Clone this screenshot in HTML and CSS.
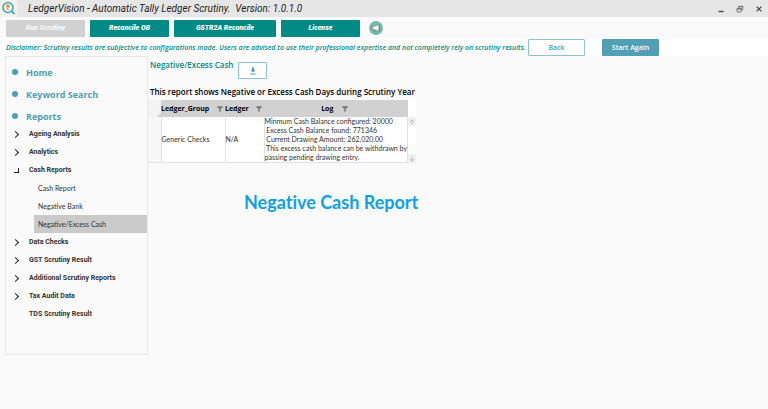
FILE: index.html
```
<!DOCTYPE html>
<html lang="en">
<head>
    <meta charset="UTF-8">
    <meta name="viewport" content="width=device-width, initial-scale=1.0">
    <title>LedgerVision</title>
    <link rel="stylesheet" href="styles.css">
</head>
<body>
    <header class="titlebar">
        <svg class="titlebar__logo" viewBox="0 0 17 17">
            <rect width="17" height="17" rx="2" fill="#f3f1ee"/>
            <circle cx="8" cy="7.5" r="5" fill="#fdf3e6" stroke="#35b0b5" stroke-width="1.6"/>
            <path d="M11.6 11.4l2.4 2.2" stroke="#35b0b5" stroke-width="1.8" stroke-linecap="round"/>
            <path d="M6 5h4M6 6.5h4M6.6 5c3 0 3 3 0 3l2.2 2.4" fill="none" stroke="#f08a3c" stroke-width="1"/>
        </svg>
        <h1 class="titlebar__title">LedgerVision - Automatic Tally Ledger Scrutiny.&nbsp; Version: 1.0.1.0</h1>
        <div class="titlebar__controls">
            <button type="button" aria-label="Minimize">
                <svg viewBox="0 0 8 8"><path d="M1.5 6.5h5" stroke="#444" stroke-width="1.4"/></svg>
            </button>
            <button type="button" aria-label="Restore">
                <svg viewBox="0 0 8 8"><path d="M1 3.5h4.4L4.9 7H1zM2.6 3.3V1.3H7L6.5 5H5.4M1 4.2h4.3M2.6 1.8H7" fill="none" stroke="#666" stroke-width=".8"/></svg>
            </button>
            <button type="button" aria-label="Close">
                <svg viewBox="0 0 8 8"><path d="M1.6 1.6l4.8 4.8M6.4 1.6L1.6 6.4" stroke="#444" stroke-width="1.2"/></svg>
            </button>
        </div>
    </header>

    <div class="toolbar">
        <button type="button" class="toolbar__button" disabled>Run Scrutiny</button>
        <button type="button" class="toolbar__button">Reconcile OB</button>
        <button type="button" class="toolbar__button toolbar__button--wide">GSTR2A Reconcile</button>
        <button type="button" class="toolbar__button">License</button>
        <button type="button" class="toolbar__announce" aria-label="Announcements">
            <svg viewBox="0 0 14 14">
                <circle cx="7" cy="7" r="7" fill="#74bda8"/>
                <path d="M3.2 5.2h2.5L10 3.6v6.6L5.7 8.7H3.2z" fill="#f4f4f4" stroke="#6d7d84" stroke-width=".5"/>
                <path d="M4.4 8.7h1.5l.6 2H5z" fill="#6d7d84"/>
                <path d="M10.3 3.2v7.2" stroke="#6d7d84" stroke-width=".9"/>
                <path d="M3 5.2v3.5" stroke="#c96262" stroke-width=".9"/>
            </svg>
        </button>
    </div>

    <div class="notice">
        <p class="notice__text">Disclaimer: Scrutiny results are subjective to configurations made. Users are advised to use their professional expertise and not completely rely on scrutiny results.</p>
        <button type="button" class="notice__button">Back</button>
        <button type="button" class="notice__button notice__button--primary">Start Again</button>
    </div>

    <div class="layout">
        <nav class="sidebar">
            <ul class="menu">
                <li><a class="menu__link" href="#">Home</a></li>
                <li><a class="menu__link" href="#">Keyword Search</a></li>
                <li><a class="menu__link" href="#">Reports</a></li>
            </ul>
            <ul class="tree">
                <li><a class="tree__link tree__link--closed" href="#">Ageing Analysis</a></li>
                <li><a class="tree__link tree__link--closed" href="#">Analytics</a></li>
                <li>
                    <a class="tree__link tree__link--open" href="#">Cash Reports</a>
                    <ul class="tree__children">
                        <li><a class="tree__child" href="#">Cash Report</a></li>
                        <li><a class="tree__child" href="#">Negative Bank</a></li>
                        <li><a class="tree__child tree__child--active" href="#">Negative/Excess Cash</a></li>
                    </ul>
                </li>
                <li><a class="tree__link tree__link--closed" href="#">Data Checks</a></li>
                <li><a class="tree__link tree__link--closed" href="#">GST Scrutiny Result</a></li>
                <li><a class="tree__link tree__link--closed" href="#">Additional Scrutiny Reports</a></li>
                <li><a class="tree__link tree__link--closed" href="#">Tax Audit Data</a></li>
                <li><a class="tree__link" href="#">TDS Scrutiny Result</a></li>
            </ul>
        </nav>

        <main class="report">
            <div class="report__head">
                <h2 class="report__title">Negative/Excess Cash</h2>
                <button type="button" class="report__download" aria-label="Download">
                    <svg viewBox="0 0 8 8"><path d="M3 .5h2V3h1.6L4 5.6 1.4 3H3zM1.3 6.4h5.4v1H1.3z" fill="#4f9fb5"/></svg>
                </button>
            </div>
            <p class="report__about">This report shows Negative or Excess Cash Days during Scrutiny Year</p>
            <div class="grid">
                <table class="grid__table">
                    <thead>
                        <tr>
                            <th class="grid__corner"></th>
                            <th class="grid__group"><div class="grid__label">Ledger_Group <svg class="filter" viewBox="0 0 6 6"><path d="M.2.3h5.6v.9L3.7 3.1v2.7H2.3V3.1L.2 1.2z"/></svg></div></th>
                            <th class="grid__ledger"><div class="grid__label">Ledger <svg class="filter" viewBox="0 0 6 6"><path d="M.2.3h5.6v.9L3.7 3.1v2.7H2.3V3.1L.2 1.2z"/></svg></div></th>
                            <th class="grid__log"><div class="grid__label grid__label--center">Log <svg class="filter" viewBox="0 0 6 6"><path d="M.2.3h5.6v.9L3.7 3.1v2.7H2.3V3.1L.2 1.2z"/></svg></div></th>
                        </tr>
                    </thead>
                    <tbody>
                        <tr>
                            <td class="grid__marker"></td>
                            <td>Generic Checks</td>
                            <td>N/A</td>
                            <td class="grid__text">Minmum Cash Balance configured: 20000
 Excess Cash Balance found: 771346
 Current Drawing Amount: 262,020.00
 This excess cash balance can be withdrawn by
passing pending drawing entry.</td>
                        </tr>
                    </tbody>
                </table>
                <div class="scroll">
                    <button type="button" class="scroll__button" aria-label="Scroll up">
                        <svg viewBox="0 0 6 6"><path d="M3 5.5V1M1 2.8L3 .8l2 2" /></svg>
                    </button>
                    <button type="button" class="scroll__button" aria-label="Scroll down">
                        <svg viewBox="0 0 6 6"><path d="M3 .5V5M1 3.2l2 2 2-2" /></svg>
                    </button>
                </div>
            </div>
            <p class="caption">Negative Cash Report</p>
        </main>
    </div>
</body>
</html>
```

FILE: styles.css
```
* {
    margin: 0;
    padding: 0;
    box-sizing: border-box;
}

body {
    min-height: 100vh;
    background-color: #fafafa;
    font-family: "Open Sans", "Noto Sans", sans-serif;
    font-size: 7px;
    color: #333;
}

ul {
    list-style: none;
}

a {
    color: inherit;
    text-decoration: none;
}

button {
    border: none;
    background: none;
    font-family: inherit;
    cursor: pointer;
}

svg {
    display: block;
}

.titlebar {
    display: flex;
    align-items: center;
    height: 17px;
    padding-right: 5px;
    background-color: #e6e6e6;
}

.titlebar__logo {
    width: 17px;
    height: 17px;
}

.titlebar__title {
    flex: 1;
    margin-left: 11px;
    font-family: Roboto, sans-serif;
    font-size: 10px;
    font-weight: 400;
    font-style: italic;
    color: #222;
}

.titlebar__controls {
    display: flex;
    gap: 11px;
}

.titlebar__controls svg {
    width: 8px;
    height: 8px;
}

.toolbar {
    display: flex;
    align-items: center;
    gap: 5px;
    height: 22px;
    padding: 0 6px;
}

.toolbar__button {
    width: 79px;
    height: 17px;
    border-radius: 1px;
    background-color: #008b86;
    color: #fff;
    font-family: Roboto, sans-serif;
    font-size: 7px;
    font-weight: 900;
    font-style: italic;
}

.toolbar__button--wide {
    width: 102px;
}

.toolbar__button:disabled {
    background-color: #d1d1d1;
    color: #f6f6f6;
}

.toolbar__announce {
    margin-left: 4px;
}

.toolbar__announce svg {
    width: 14px;
    height: 14px;
}

.notice {
    display: flex;
    align-items: center;
    height: 17px;
    padding-left: 6px;
    background-color: #fff;
}

.notice__text {
    width: 522px;
    color: #008b86;
    font-size: 7px;
    font-weight: 600;
    font-style: italic;
    white-space: nowrap;
}

.notice__button {
    width: 57px;
    height: 17px;
    margin-right: 17px;
    border: 1px solid #8cc4d1;
    border-radius: 1px;
    background-color: #fff;
    color: #4f9fb5;
    font-size: 7px;
    font-weight: 600;
}

.notice__button--primary {
    border-color: #4f9fb5;
    background-color: #4f9fb5;
    color: #fff;
}

.layout {
    display: flex;
    align-items: flex-start;
    padding-left: 5px;
}

.sidebar {
    width: 143px;
    padding: 4px 0 31px;
    border: 1px solid #e8e8e8;
}

.menu__link {
    display: flex;
    align-items: center;
    gap: 8px;
    height: 22px;
    padding-left: 6px;
    color: #4f9fb5;
    font-size: 9px;
    font-weight: 700;
}

.menu__link::before {
    content: '';
    width: 6px;
    height: 6px;
    border-radius: 50%;
    background-color: #4f9fb5;
}

.tree {
    margin-top: -2px;
}

.tree__link {
    position: relative;
    display: flex;
    align-items: center;
    height: 18px;
    padding-left: 23px;
    font-family: Roboto, sans-serif;
    font-size: 7px;
    font-weight: 700;
}

/* expander arrows */
.tree__link--closed::before,
.tree__link--open::before {
    content: '';
    position: absolute;
    top: 7px;
    left: 7px;
    width: 4px;
    height: 4px;
    border: solid #222;
    border-width: 1px 1px 0 0;
    transform: rotate(45deg);
}

.tree__link--open::before {
    left: 8px;
    border-width: 0 1px 1px 0;
    transform: none;
}

.tree__child {
    display: flex;
    align-items: center;
    height: 18px;
    margin-left: 28px;
    padding-left: 4px;
    font-family: Lato, sans-serif;
    font-size: 7px;
}

.tree__child--active {
    background-color: #cacaca;
}

.report {
    flex: 1;
}

.report__head {
    display: flex;
    gap: 4px;
    padding: 4px 2px 0;
}

.report__title {
    width: 84px;
    color: #008b86;
    font-size: 8px;
    font-weight: 600;
    line-height: 10px;
    white-space: nowrap;
}

.report__download {
    display: flex;
    align-items: center;
    justify-content: center;
    width: 29px;
    height: 17px;
    margin-top: 2px;
    border: 1px solid #8cc4d1;
    border-radius: 1px;
    background-color: #fff;
}

.report__download svg {
    width: 8px;
    height: 8px;
}

.report__about {
    padding: 8px 2px 3px;
    color: #000;
    font-size: 8px;
    font-weight: 600;
    line-height: 10px;
}

.grid {
    display: flex;
    align-items: stretch;
}

.grid__table {
    border-collapse: collapse;
    table-layout: fixed;
    width: 260px;
}

.grid__corner {
    width: 13px;
    background: linear-gradient(135deg, #f3f3f3 50%, #d1d1d1 50%) bottom right / 5px 5px no-repeat #f3f3f3;
}

.grid__group {
    width: 64px;
}

.grid__ledger {
    width: 39px;
}

.grid th {
    height: 17px;
    color: #000;
    font-size: 7px;
    font-weight: 700;
    text-align: left;
}

.grid th + th {
    background-color: #d1d1d1;
}

.grid__label {
    display: flex;
    align-items: center;
    justify-content: space-between;
    padding-right: 2px;
    white-space: nowrap;
}

.grid__label--center {
    justify-content: center;
    gap: 9px;
}

.filter {
    width: 6px;
    height: 6px;
    fill: #777;
}

.grid td {
    border: solid #e2e2e2;
    border-width: 0 1px 1px 0;
    background-color: #fff;
    font-family: Lato, sans-serif;
    font-size: 7px;
    line-height: 9px;
}

.grid .grid__marker {
    background-color: #f7f7f7;
}

.grid .grid__text {
    white-space: pre;
}

.scroll {
    display: flex;
    flex-direction: column;
    justify-content: space-between;
    width: 8px;
    padding-top: 17px;
    background-color: #fff;
}

.scroll__button {
    display: flex;
    align-items: center;
    justify-content: center;
    height: 9px;
    background-color: #f0f0f0;
}

.scroll__button svg {
    width: 6px;
    height: 6px;
    fill: none;
    stroke: #bbb;
}

.caption {
    padding: 28px 0 0 96px;
    color: #0ea1e6;
    font-family: Lato, sans-serif;
    font-size: 18px;
    font-variant-ligatures: none;
    font-weight: 700;
    line-height: 23px;
}
```
